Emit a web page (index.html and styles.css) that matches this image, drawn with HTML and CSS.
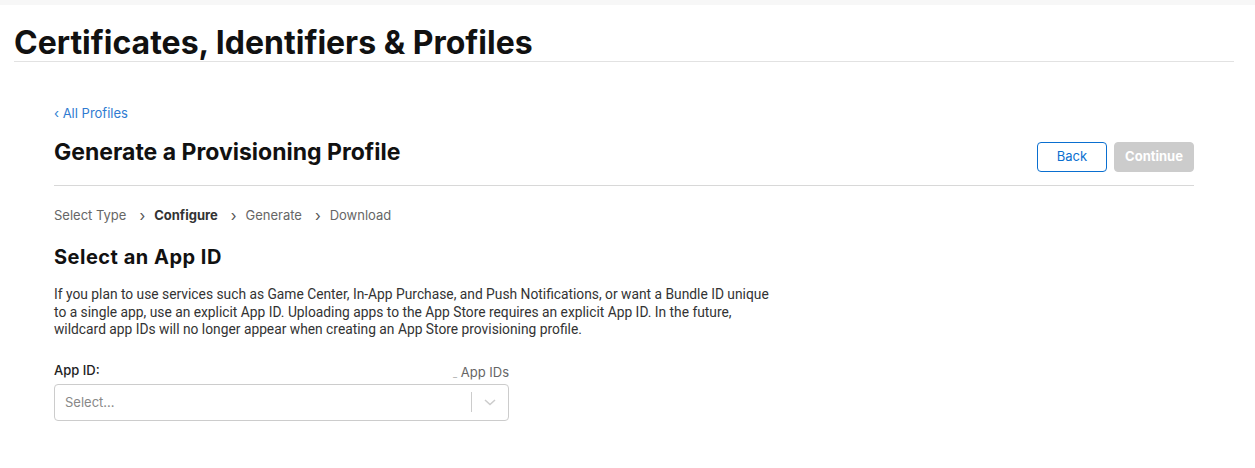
FILE: index.html
```html
<!DOCTYPE html>
<html>
<head>
<meta charset="utf-8">
<link rel="stylesheet" href="styles.css">
</head>
<body>
<div class="topstrip"></div>
<header class="header">
  <h1 class="site-title">Certificates, Identifiers &amp; Profiles</h1>
</header>
<main class="main">
  <a class="back-link" href="#">&lsaquo; All Profiles</a>
  <div class="title-row">
    <h2 class="page-title">Generate a Provisioning Profile</h2>
    <div class="actions">
      <button class="btn btn-back">Back</button>
      <button class="btn btn-continue">Continue</button>
    </div>
  </div>
  <nav class="steps">
    <span class="step">Select Type</span>
    <span class="sep">&rsaquo;</span>
    <span class="step current">Configure</span>
    <span class="sep">&rsaquo;</span>
    <span class="step">Generate</span>
    <span class="sep">&rsaquo;</span>
    <span class="step">Download</span>
  </nav>
  <h3 class="section-title">Select an App ID</h3>
  <p class="desc">If you plan to use services such as Game Center, In-App Purchase, and Push Notifications, or want a Bundle ID unique to a single app, use an explicit App ID. Uploading apps to the App Store requires an explicit App ID. In the future, wildcard app IDs will no longer appear when creating an App Store provisioning profile.</p>
  <div class="field">
    <div class="field-head">
      <span class="label">App ID:</span>
      <span class="hint"><span class="dash">_</span> App IDs</span>
    </div>
    <div class="select">
      <span class="placeholder">Select...</span>
      <span class="divider"></span>
      <span class="chev"><svg width="12" height="7" viewBox="0 0 12 7"><path d="M1 1l5 4.5L11 1" fill="none" stroke="#ccc" stroke-width="1.5"/></svg></span>
    </div>
  </div>
</main>
</body>
</html>
```
FILE: styles.css
```css
* { box-sizing: border-box; }
body {
  margin: 0;
  font-family: Inter, "Noto Sans", sans-serif;
  color: #111;
  background: #fff;
}
.topstrip { height: 5px; background: #f7f7f7; }
.header {
  margin: 0 21px 0 14px;
  border-bottom: 1px solid #e2e2e2;
  height: 57px;
}
.site-title {
  margin: 0;
  padding-top: 19px;
  font-size: 32px;
  font-weight: 700;
  letter-spacing: 0;
  line-height: 38px;
  color: #111;
}
.main {
  width: 1140px;
  margin-left: 54px;
  padding-top: 43px;
}
.back-link {
  display: block;
  font-size: 13px;
  line-height: 16px;
  color: #2f7bd1;
  text-decoration: none;
}
.title-row {
  display: flex;
  justify-content: space-between;
  align-items: flex-start;
  border-bottom: 1px solid #d8d8d8;
  padding-top: 12px;
  height: 65px;
}
.page-title {
  margin: 6px 0 0;
  font-size: 23px;
  font-weight: 700;
  line-height: 26px;
  letter-spacing: 0;
  color: #111;
}
.actions { display: flex; gap: 7px; padding-top: 9px; }
.btn {
  height: 30px;
  font-family: Inter, sans-serif;
  font-size: 13px;
  border-radius: 4px;
  padding: 0 0 2px;
}
.btn-back {
  width: 70px;
  background: #fff;
  border: 1px solid #0a6fd0;
  color: #0a6fd0;
}
.btn-continue {
  width: 80px;
  background: #cccccc;
  border: 1px solid #cccccc;
  color: #fff;
  font-weight: 700;
}
.steps {
  display: flex;
  align-items: center;
  padding-top: 19px;
  font-size: 13px;
  line-height: 18px;
  color: #666;
}
.step.current { font-weight: 700; color: #333; }
.sep { margin: 2px 9px 0 13px; font-size: 15px; color: #555; }
.section-title {
  margin: 0;
  padding-top: 19px;
  font-size: 20px;
  font-weight: 700;
  line-height: 26px;
  letter-spacing: 0.5px;
  color: #111;
}
.desc {
  margin: 0;
  padding-top: 16px;
  width: 720px;
  font-family: Roboto, sans-serif;
  font-size: 13.8px;
  line-height: 17.5px;
  color: #333;
}
.field { width: 455px; padding-top: 18px; }
.field-head {
  display: flex;
  justify-content: space-between;
  align-items: flex-end;
  height: 21px;
}
.label { font-size: 13px; font-weight: 500; color: #222; line-height: 16px; }
.hint { font-size: 13px; color: #666; line-height: 16px; margin-bottom: -4px; }
.dash { color: #aaa; font-size: 9px; }
.select {
  margin-top: 6px;
  height: 37px;
  border: 1px solid #cccccc;
  border-radius: 4px;
  display: flex;
  align-items: center;
  padding-left: 10px;
}
.placeholder { flex: 1; font-size: 13px; color: #888; }
.divider { width: 1px; height: 20px; background: #cccccc; }
.chev { width: 36px; display: flex; justify-content: center; align-items: center; }
```
